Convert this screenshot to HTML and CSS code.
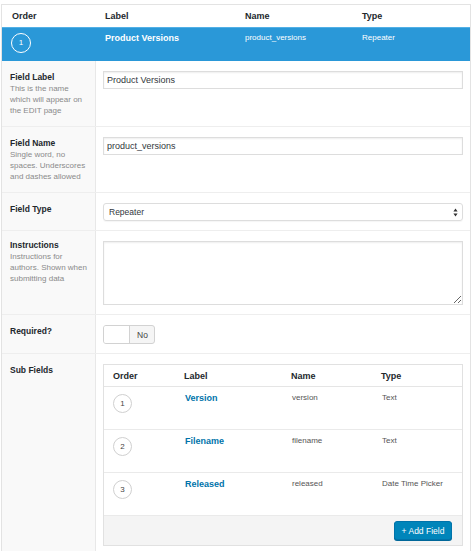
FILE: index.html
```html
<!DOCTYPE html>
<html>
<head>
<meta charset="utf-8">
<link rel="stylesheet" href="styles.css">
</head>
<body>
<div class="panel">
  <div class="thead">
    <div>Order</div><div>Label</div><div>Name</div><div>Type</div>
  </div>
  <div class="trow">
    <div class="c-order"><span class="circle">1</span></div>
    <div class="c-label">Product Versions</div>
    <div class="c-meta">product_versions</div>
    <div class="c-meta">Repeater</div>
  </div>

  <div class="srow">
    <div class="slabel"><div class="lt">Field Label</div><p class="desc">This is the name which will appear on the EDIT page</p></div>
    <div class="sinput"><input class="txt" type="text" value="Product Versions"></div>
  </div>
  <div class="srow">
    <div class="slabel"><div class="lt">Field Name</div><p class="desc">Single word, no spaces. Underscores and dashes allowed</p></div>
    <div class="sinput"><input class="txt" type="text" value="product_versions"></div>
  </div>
  <div class="srow">
    <div class="slabel"><div class="lt">Field Type</div></div>
    <div class="sinput">
      <div class="sel"><span>Repeater</span>
        <svg width="5" height="9" viewBox="0 0 5 9"><path d="M2.5 0.5 L4.6 3.6 L0.4 3.6 Z M2.5 8.5 L4.6 5.4 L0.4 5.4 Z" fill="#333"/></svg>
      </div>
    </div>
  </div>
  <div class="srow">
    <div class="slabel lab-ins"><div class="lt">Instructions</div><p class="desc">Instructions for authors. Shown when submitting data</p></div>
    <div class="sinput"><textarea class="area"></textarea></div>
  </div>
  <div class="srow">
    <div class="slabel"><div class="lt">Required?</div></div>
    <div class="sinput"><div class="toggle"><span class="knob"></span><span class="tno">No</span></div></div>
  </div>
  <div class="srow last">
    <div class="slabel"><div class="lt">Sub Fields</div></div>
    <div class="sinput">
      <div class="sub">
        <div class="sub-head"><div>Order</div><div>Label</div><div>Name</div><div>Type</div></div>
        <div class="sub-row">
          <div class="so"><span class="num">1</span></div>
          <div class="sl"><a>Version</a></div>
          <div class="sm">version</div>
          <div class="sm">Text</div>
        </div>
        <div class="sub-row">
          <div class="so"><span class="num">2</span></div>
          <div class="sl"><a>Filename</a></div>
          <div class="sm">filename</div>
          <div class="sm">Text</div>
        </div>
        <div class="sub-row">
          <div class="so"><span class="num">3</span></div>
          <div class="sl"><a>Released</a></div>
          <div class="sm">released</div>
          <div class="sm">Date Time Picker</div>
        </div>
        <div class="sub-foot"><button class="btn">+ Add Field</button></div>
      </div>
    </div>
  </div>
</div>
</body>
</html>
```
FILE: styles.css
```css
* { box-sizing: border-box; }
html, body { margin: 0; padding: 0; background: #fff; }
body {
  font-family: "Liberation Sans", Arial, Helvetica, sans-serif;
  color: #23282d;
  overflow: hidden;
}
.panel {
  margin: 4px 0 0 1px;
  width: 470px;
  border: 1px solid #e3e3e3;
  border-bottom: none;
  background: #fff;
}
.thead, .trow {
  display: grid;
  grid-template-columns: 93px 140px 117px 1fr;
}
.thead {
  height: 22px;
  font-size: 9px;
  font-weight: bold;
  line-height: 12px;
}
.thead > div { padding: 5px 0 0 10px; }
.trow {
  height: 34px;
  background: #2a98d8;
  color: #fff;
  border-top: 1px solid #52b0e6;
}
.trow > div { padding: 4px 0 0 10px; line-height: 12px; }
.trow > .c-order { padding: 5px 0 0 9px; }
.circle {
  display: flex;
  align-items: center;
  justify-content: center;
  width: 20px;
  height: 20px;
  border: 1px solid #fff;
  border-radius: 50%;
  font-size: 8px;
}
.c-label { font-size: 9px; font-weight: bold; }
.c-meta { font-size: 8px; }

.srow {
  display: flex;
  border-top: 1px solid #eee;
}
.trow + .srow { border-top: none; }
.slabel {
  width: 94px;
  flex: none;
  background: #f9f9f9;
  border-right: 1px solid #e8e8e8;
  padding: 10px 5px 10px 8px;
}
.lt {
  font-size: 8.5px;
  font-weight: bold;
  line-height: 12px;
  color: #23282d;
}
.desc {
  margin: 0;
  font-size: 8px;
  line-height: 11px;
  color: #8a8a8a;
}
.lab-ins { padding-top: 8px; }
.sinput {
  flex: 1;
  padding: 10px 7px 9px 7px;
}
.txt {
  display: block;
  width: 360px;
  height: 18px;
  margin: 0;
  border: 1px solid #ddd;
  border-radius: 0;
  box-shadow: inset 0 1px 2px rgba(0,0,0,0.07);
  padding: 0 3px;
  font-family: inherit;
  font-size: 9px;
  color: #32373c;
  outline: none;
}
.sel {
  display: flex;
  align-items: center;
  justify-content: space-between;
  width: 360px;
  height: 18px;
  border: 1px solid #ddd;
  border-radius: 3px;
  box-shadow: 0 1px 1px rgba(0,0,0,0.04);
  padding: 0 4px 0 5px;
  font-size: 8.5px;
  color: #32373c;
}
.area {
  display: block;
  width: 360px;
  height: 64px;
  margin: 0;
  border: 1px solid #ddd;
  box-shadow: inset 0 1px 2px rgba(0,0,0,0.07);
  resize: both;
  font-family: inherit;
  outline: none;
}
.toggle {
  display: flex;
  align-items: center;
  width: 52px;
  height: 19px;
  border: 1px solid #d2d2d2;
  border-radius: 3px;
  background: #f5f5f5;
  overflow: hidden;
}
.knob {
  width: 26px;
  height: 17px;
  background: #fff;
  border-right: 1px solid #d2d2d2;
}
.tno {
  margin-left: 7px;
  font-size: 8.5px;
  color: #444;
}

.sub {
  width: 360px;
  border: 1px solid #e1e1e1;
  background: #fff;
}
.sub-head, .sub-row {
  display: grid;
  grid-template-columns: 71px 107px 90px 1fr;
}
.sub-head {
  height: 22px;
  border-bottom: 1px solid #e5e5e5;
  font-size: 9px;
  font-weight: 600;
  line-height: 12px;
}
.sub-head > div { padding: 5px 0 0 9px; }
.sub-row {
  height: 43px;
  border-bottom: 1px solid #eaeaea;
}
.sub-row > div { padding: 5px 0 0 10px; line-height: 12px; }
.sub-row > .so { padding: 7px 0 0 9px; }
.num {
  display: flex;
  align-items: center;
  justify-content: center;
  width: 19px;
  height: 19px;
  border: 1px solid #d0d0d0;
  border-radius: 50%;
  font-size: 8px;
  color: #444;
}
.sl {
  font-size: 9px;
  font-weight: bold;
}
.sl a { color: #0073aa; }
.sm {
  font-size: 8px;
  color: #555;
}
.sub-foot {
  display: flex;
  justify-content: flex-end;
  height: 29px;
  padding: 5px 10px 0 0;
  background: #f4f4f4;
}
.btn {
  height: 19px;
  width: 58px;
  padding: 0;
  border: 1px solid #0073aa;
  border-radius: 3px;
  background: #0085ba;
  box-shadow: 0 1px 0 #006799;
  color: #fff;
  font-family: inherit;
  font-size: 8.5px;
}
.srow.last .sinput { padding-bottom: 10px; }
```
